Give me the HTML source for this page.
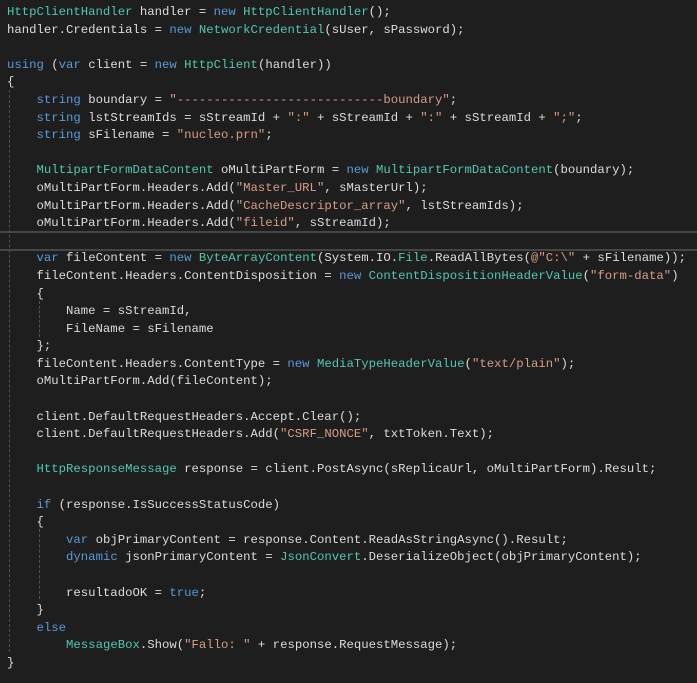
<!DOCTYPE html>
<html><head><meta charset="utf-8"><style>
html,body{margin:0;padding:0;background:#1e1e1e;width:697px;height:683px;overflow:hidden}
pre{margin:0;position:absolute;left:7px;top:4px;font-family:"Liberation Mono",monospace;font-size:12.3px;line-height:17.6px;color:#dcdcdc;white-space:pre}
.t{color:#4ec9b0}.k{color:#569cd6}.s{color:#d69d85}
.g{position:absolute;border-left:1px dashed #505050;width:0}
.cur{position:absolute;left:0;top:231px;width:697px;height:16px;border-top:2px solid #464646;border-bottom:2px solid #464646}
</style></head><body>
<div class="cur"></div>
<div class="g" style="left:9px;top:90px;height:562px"></div>
<div class="g" style="left:39px;top:301px;height:36px"></div>
<div class="g" style="left:39px;top:529px;height:70px"></div>
<pre><span class="t">HttpClientHandler</span> handler = <span class="k">new</span> <span class="t">HttpClientHandler</span>();
handler.Credentials = <span class="k">new</span> <span class="t">NetworkCredential</span>(sUser, sPassword);

<span class="k">using</span> (<span class="k">var</span> client = <span class="k">new</span> <span class="t">HttpClient</span>(handler))
{
    <span class="k">string</span> boundary = <span class="s">"----------------------------boundary"</span>;
    <span class="k">string</span> lstStreamIds = sStreamId + <span class="s">":"</span> + sStreamId + <span class="s">":"</span> + sStreamId + <span class="s">";"</span>;
    <span class="k">string</span> sFilename = <span class="s">"nucleo.prn"</span>;

    <span class="t">MultipartFormDataContent</span> oMultiPartForm = <span class="k">new</span> <span class="t">MultipartFormDataContent</span>(boundary);
    oMultiPartForm.Headers.Add(<span class="s">"Master_URL"</span>, sMasterUrl);
    oMultiPartForm.Headers.Add(<span class="s">"CacheDescriptor_array"</span>, lstStreamIds);
    oMultiPartForm.Headers.Add(<span class="s">"fileid"</span>, sStreamId);

    <span class="k">var</span> fileContent = <span class="k">new</span> <span class="t">ByteArrayContent</span>(System.IO.<span class="t">File</span>.ReadAllBytes(<span class="s">@"C:\"</span> + sFilename));
    fileContent.Headers.ContentDisposition = <span class="k">new</span> <span class="t">ContentDispositionHeaderValue</span>(<span class="s">"form-data"</span>)
    {
        Name = sStreamId,
        FileName = sFilename
    };
    fileContent.Headers.ContentType = <span class="k">new</span> <span class="t">MediaTypeHeaderValue</span>(<span class="s">"text/plain"</span>);
    oMultiPartForm.Add(fileContent);

    client.DefaultRequestHeaders.Accept.Clear();
    client.DefaultRequestHeaders.Add(<span class="s">"CSRF_NONCE"</span>, txtToken.Text);

    <span class="t">HttpResponseMessage</span> response = client.PostAsync(sReplicaUrl, oMultiPartForm).Result;

    <span class="k">if</span> (response.IsSuccessStatusCode)
    {
        <span class="k">var</span> objPrimaryContent = response.Content.ReadAsStringAsync().Result;
        <span class="k">dynamic</span> jsonPrimaryContent = <span class="t">JsonConvert</span>.DeserializeObject(objPrimaryContent);

        resultadoOK = <span class="k">true</span>;
    }
    <span class="k">else</span>
        <span class="t">MessageBox</span>.Show(<span class="s">"Fallo: "</span> + response.RequestMessage);
}</pre>
</body></html>
